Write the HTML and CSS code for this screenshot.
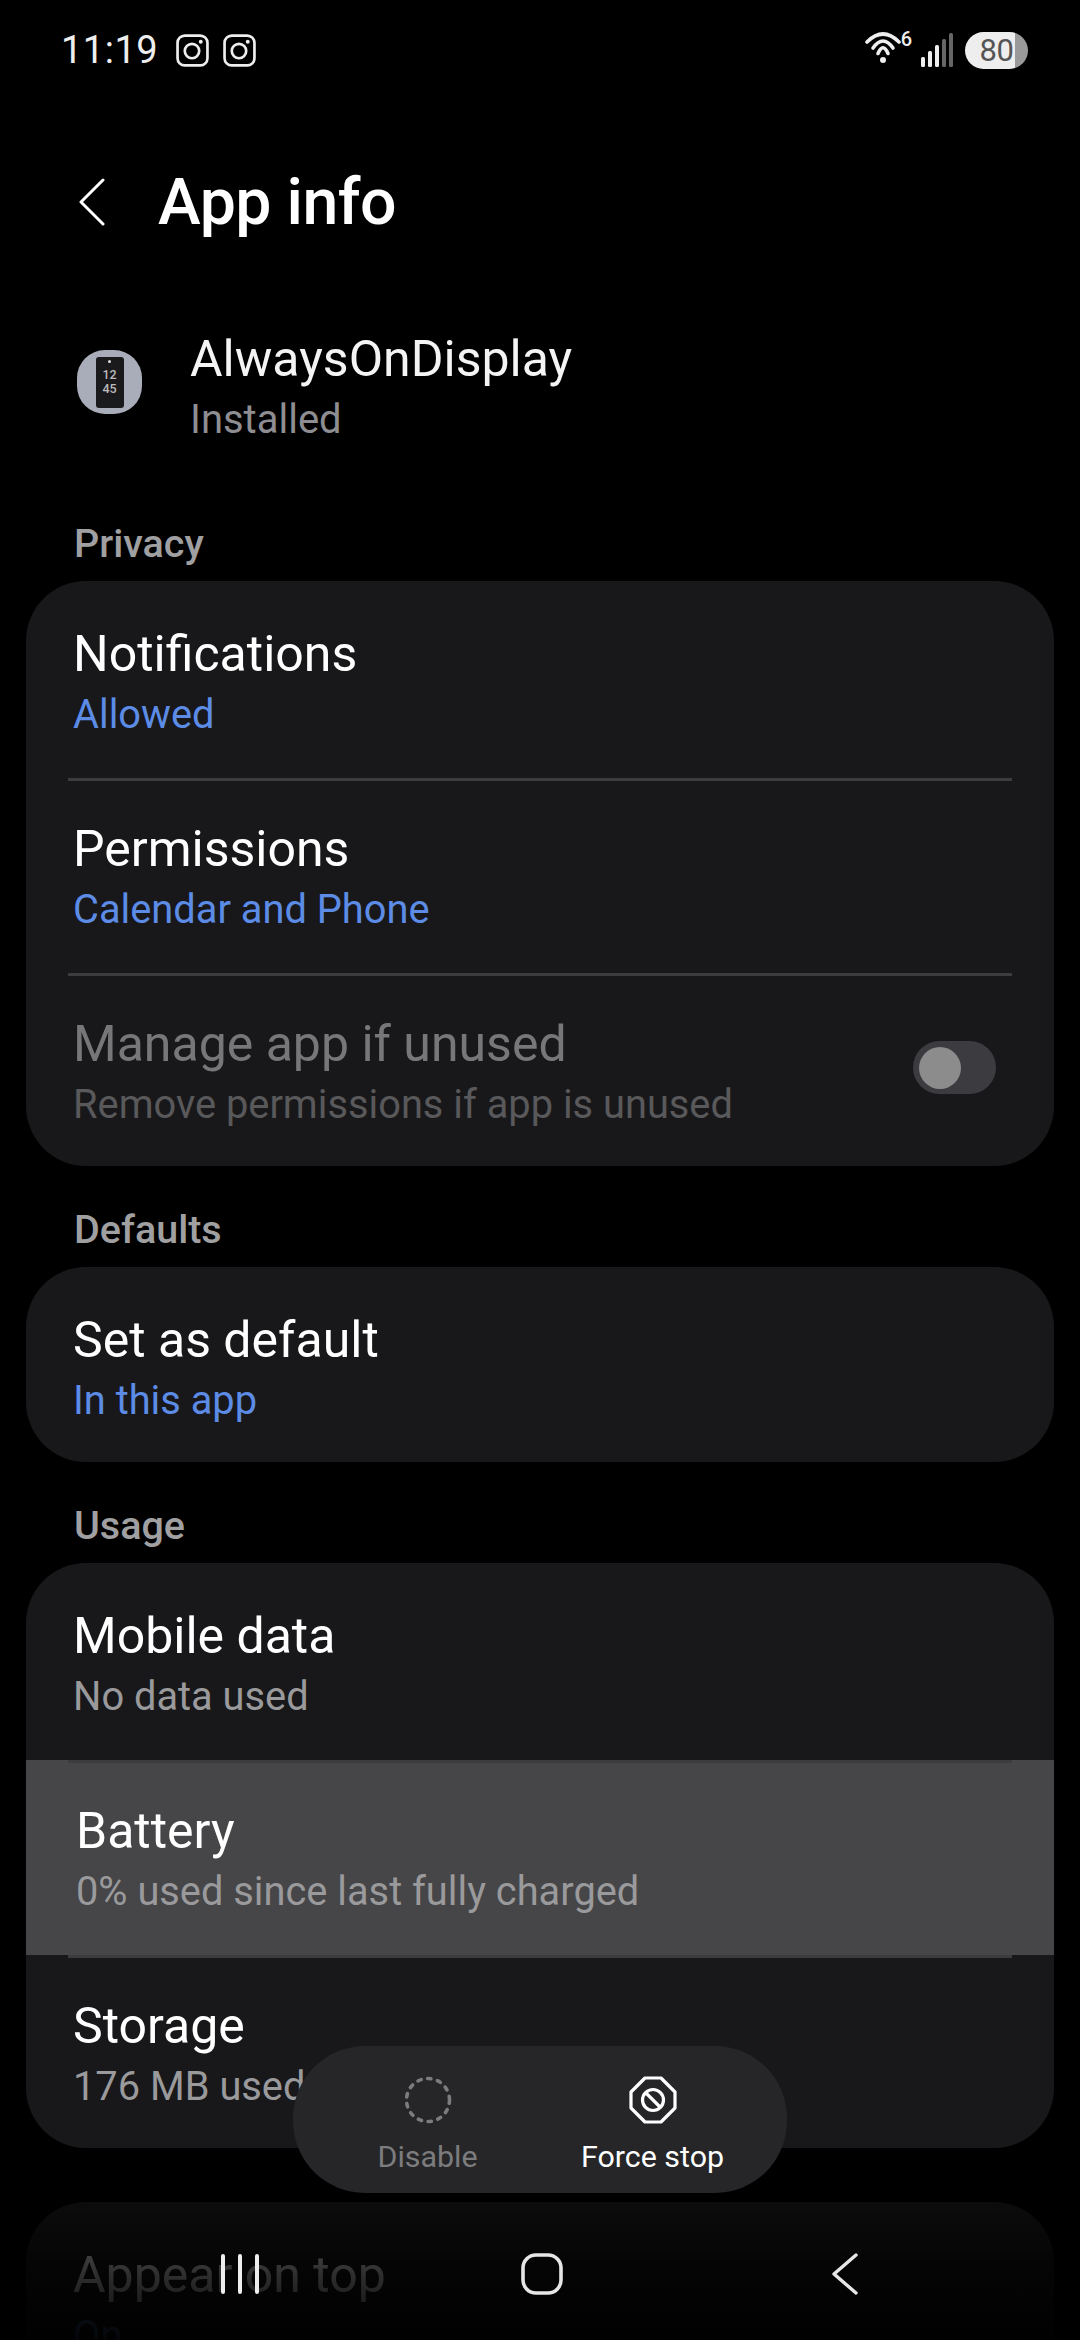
FILE: index.html
```html
<!DOCTYPE html>
<html lang="en">
<head>
    <meta charset="UTF-8">
    <meta name="viewport" content="width=device-width, initial-scale=1.0">
    <title>App info</title>
    <link rel="stylesheet" href="styles.css">
</head>
<body>
    <div class="screen">
        <div class="status-bar">
            <div class="status-left">
                <span class="clock">11:19</span>
                <svg class="insta" viewBox="0 0 32 32"><rect x="1.5" y="1.5" width="29" height="29" rx="7" fill="none" stroke="#eee" stroke-width="2.6"/><circle cx="15.5" cy="16.5" r="7" fill="none" stroke="#eee" stroke-width="2.6"/><circle cx="24" cy="7.5" r="1.9" fill="#eee"/></svg>
                <svg class="insta" viewBox="0 0 32 32"><rect x="1.5" y="1.5" width="29" height="29" rx="7" fill="none" stroke="#eee" stroke-width="2.6"/><circle cx="15.5" cy="16.5" r="7" fill="none" stroke="#eee" stroke-width="2.6"/><circle cx="24" cy="7.5" r="1.9" fill="#eee"/></svg>
            </div>
            <div class="status-right">
                <svg class="wifi" viewBox="0 0 36 32">
                    <path d="M2 10 Q18 -6 34 10" fill="none" stroke="#eee" stroke-width="3.6" stroke-linecap="round"/>
                    <path d="M8 16 Q18 2 28 16" fill="none" stroke="#eee" stroke-width="3.6" stroke-linecap="round"/>
                    <path d="M13 21.500 Q18 10 23 21.500" fill="none" stroke="#eee" stroke-width="3.6" stroke-linecap="round"/>
                    <circle cx="18" cy="28" r="3" fill="#eee"/>
                </svg>
                <span class="wifi-six">6</span>
                <svg class="signal" viewBox="0 0 32 34">
                    <rect x="0" y="24" width="4" height="10" rx="1.500" fill="#eee"/>
                    <rect x="7" y="18" width="4" height="16" rx="1.500" fill="#eee"/>
                    <rect x="14" y="12" width="4" height="22" rx="1.500" fill="#eee"/>
                    <rect x="21" y="6" width="4" height="28" rx="1.500" fill="#666"/>
                    <rect x="28" y="0" width="4" height="34" rx="1.500" fill="#666"/>
                </svg>
                <div class="battery"><span class="battery-level">80</span></div>
            </div>
        </div>

        <div class="app-bar">
            <svg class="back" viewBox="0 0 26 48"><path d="M24 2 L2 24 L24 46" fill="none" stroke="#fff" stroke-width="3" stroke-linecap="round" stroke-linejoin="round"/></svg>
            <h1 class="page-title">App info</h1>
        </div>

        <div class="app-head">
            <div class="app-icon">
                <div class="app-phone">
                    <span class="app-phone-dot"></span>
                    <span class="app-phone-time">12<br>45</span>
                </div>
            </div>
            <div class="app-text">
                <div class="app-name">AlwaysOnDisplay</div>
                <div class="app-state">Installed</div>
            </div>
        </div>

        <div class="section-label">Privacy</div>
        <div class="card">
            <div class="row">
                <div class="row-title">Notifications</div>
                <div class="row-sub blue">Allowed</div>
            </div>
            <div class="divider"></div>
            <div class="row">
                <div class="row-title">Permissions</div>
                <div class="row-sub blue">Calendar and Phone</div>
            </div>
            <div class="divider"></div>
            <div class="row row-toggle">
                <div>
                    <div class="row-title dim">Manage app if unused</div>
                    <div class="row-sub dimmer">Remove permissions if app is unused</div>
                </div>
                <div class="toggle"><span class="toggle-thumb"></span></div>
            </div>
        </div>

        <div class="section-label">Defaults</div>
        <div class="card">
            <div class="row">
                <div class="row-title">Set as default</div>
                <div class="row-sub blue">In this app</div>
            </div>
        </div>

        <div class="section-label">Usage</div>
        <div class="card">
            <div class="row">
                <div class="row-title">Mobile data</div>
                <div class="row-sub">No data used</div>
            </div>
            <div class="divider"></div>
            <div class="row row-pressed">
                <div class="row-title">Battery</div>
                <div class="row-sub">0% used since last fully charged</div>
            </div>
            <div class="divider"></div>
            <div class="row">
                <div class="row-title">Storage</div>
                <div class="row-sub">176 MB used</div>
            </div>
        </div>

        <div class="card card-next">
            <div class="row">
                <div class="row-title">Appear on top</div>
                <div class="row-sub blue">On</div>
            </div>
        </div>

        <div class="bottom-fade"></div>

        <div class="action-bar">
            <div class="action action-off">
                <svg class="action-icon" viewBox="0 0 48 48"><circle cx="24" cy="24" r="21.500" fill="none" stroke="#7c7c7e" stroke-width="3.600" stroke-linecap="round" stroke-dasharray="3.400 6.630"/></svg>
                <span>Disable</span>
            </div>
            <div class="action">
                <svg class="action-icon" viewBox="0 0 48 48">
                    <path d="M16 2 H32 L46 16 V32 L32 46 H16 L2 32 V16 Z" fill="none" stroke="#fff" stroke-width="3.200" stroke-linejoin="round"/>
                    <circle cx="24" cy="24" r="10.500" fill="none" stroke="#fff" stroke-width="3.200"/>
                    <path d="M17 17 L31 31" stroke="#fff" stroke-width="3.200"/>
                </svg>
                <span>Force stop</span>
            </div>
        </div>

        <div class="nav-bar">
            <svg class="nav-recents" viewBox="0 0 38 42"><path d="M2 3 V39 M19 3 V39 M36 3 V39" stroke="#eee" stroke-width="4" stroke-linecap="round" fill="none"/></svg>
            <svg class="nav-home" viewBox="0 0 42 42"><rect x="2" y="2" width="38" height="38" rx="13" fill="none" stroke="#e6e6e6" stroke-width="3.600"/></svg>
            <svg class="nav-back" viewBox="0 0 26 42"><path d="M24 2 L2 21 L24 40" fill="none" stroke="#e6e6e6" stroke-width="3.400" stroke-linecap="round" stroke-linejoin="round"/></svg>
        </div>
    </div>
</body>
</html>
```

FILE: styles.css
```css
* {
    box-sizing: border-box;
}
html, body {
    margin: 0;
    padding: 0;
    background-color: #000;
}
body {
    font-family: Roboto, "Noto Sans", sans-serif;
    color: #fff;
}
.screen {
    position: relative;
    width: 1080px;
    height: 2340px;
    padding: 0 26px;
    overflow: hidden;
    background-color: #000;
}

/* status bar */
.status-bar {
    display: flex;
    justify-content: space-between;
    align-items: center;
    height: 100px;
    padding: 0 26px 0 35px;
}
.status-left {
    display: flex;
    align-items: center;
}
.clock {
    width: 115px;
    font-size: 38px;
    letter-spacing: 0.5px;
    color: #eee;
}
.insta {
    width: 33px;
    height: 33px;
    margin-right: 14px;
}
.status-right {
    display: flex;
    align-items: center;
}
.wifi {
    width: 36px;
    height: 32px;
    margin-top: -4px;
}
.wifi-six {
    margin: -22px 9px 0 0;
    font-size: 20px;
    line-height: 20px;
    font-weight: 500;
    color: #eee;
}
.signal {
    width: 32px;
    height: 34px;
}
.battery {
    display: flex;
    align-items: center;
    justify-content: center;
    width: 63px;
    height: 37px;
    margin-left: 12px;
    border-radius: 19px;
    background: linear-gradient(to right, #eee 0, #eee 79%, #9a9a9a 79%);
}
.battery-level {
    font-size: 31px;
    color: #555;
    letter-spacing: -0.5px;
}

/* title */
.app-bar {
    display: flex;
    align-items: center;
    height: 102px;
    margin-top: 51px;
}
.back {
    width: 26px;
    height: 48px;
    margin-left: 53px;
}
.page-title {
    margin: 0 0 0 53px;
    font-size: 64.400px;
    font-weight: 500;
    line-height: 80px;
    letter-spacing: -0.5px;
}

/* app header */
.app-head {
    display: flex;
    align-items: center;
    height: 186px;
    margin-top: 41px;
    padding-left: 51px;
}
.app-icon {
    display: flex;
    justify-content: center;
    align-items: center;
    width: 65px;
    height: 64px;
    margin-right: 48px;
    margin-bottom: 10px;
    border-radius: 28px;
    background-color: #a9adb9;
}
.app-phone {
    display: flex;
    flex-direction: column;
    align-items: center;
    width: 28px;
    height: 51px;
    padding-top: 3px;
    border-radius: 3px;
    background-color: #1a1a1c;
}
.app-phone-dot {
    width: 3px;
    height: 3px;
    border-radius: 50%;
    background-color: #ddd;
}
.app-phone-time {
    margin-top: 5px;
    font-size: 12.500px;
    font-weight: 500;
    line-height: 14px;
    text-align: center;
    color: #bbb;
}
.app-text {
    padding-top: 4px;
}
.app-name {
    font-size: 50px;
    line-height: 58px;
    color: #f4f4f4;
}
.app-state {
    margin-top: 4px;
    font-size: 40px;
    line-height: 56px;
    color: #8e8e92;
}

/* list */
.section-label {
    display: flex;
    align-items: flex-end;
    height: 101px;
    padding: 0 0 12px 48px;
    font-size: 39.500px;
    font-weight: 500;
    line-height: 50px;
    color: #a0a0a2;
}
.card {
    padding-top: 5px;
    border-radius: 60px;
    background-color: #18181a;
    overflow: hidden;
}
.row {
    height: 192px;
    padding: 40px 47px 0;
}
.row:last-child {
    height: 190px;
}
.row-title {
    font-size: 50px;
    line-height: 56px;
    color: #fff;
}
.row-sub {
    margin-top: 5px;
    font-size: 39.800px;
    line-height: 56px;
    color: #9a9a9c;
}
.row-sub.blue {
    color: #5c8ce6;
}
.row-title.dim {
    color: #777779;
}
.row-sub.dimmer {
    color: #59595b;
}
.row-toggle {
    display: flex;
    justify-content: space-between;
    padding-right: 58px;
}
.toggle {
    display: flex;
    align-items: center;
    width: 83px;
    height: 53px;
    margin-top: 25px;
    padding-left: 6px;
    border-radius: 27px;
    background-color: #3c3c40;
}
.toggle-thumb {
    width: 42px;
    height: 42px;
    border-radius: 50%;
    background-color: #8c8c8c;
}
.divider {
    position: relative;
    height: 3px;
    margin: 0 42px;
    background-color: #3c3c3e;
}
.row-pressed {
    margin-top: -3px;
    height: 195px;
    padding: 43px 50px 0;
    background-color: #464648;
}
.card-next {
    margin-top: 54px;
}

/* things lying over the list */
.bottom-fade {
    position: absolute;
    left: 0;
    right: 0;
    top: 2160px;
    bottom: 0;
    background: linear-gradient(to bottom, rgba(0, 0, 0, 0.3), rgba(0, 0, 0, 0.5) 22%, rgba(0, 0, 0, 0.78) 56%, rgba(0, 0, 0, 0.86) 72%, rgba(0, 0, 0, 0.96));
}
.action-bar {
    position: absolute;
    left: 293px;
    top: 2046px;
    display: flex;
    width: 494px;
    height: 147px;
    padding: 0 22px;
    border-radius: 72px;
    background-color: #262628;
}
.action {
    display: flex;
    flex-direction: column;
    align-items: center;
    flex: 1;
    padding-top: 30px;
    font-size: 30.400px;
    line-height: 40px;
}
.action-off {
    color: #7c7c7e;
}
.action-icon {
    width: 48px;
    height: 48px;
    margin-bottom: 13px;
}
.nav-bar {
    position: absolute;
    left: 0;
    right: 0;
    top: 2253px;
    height: 42px;
}
.nav-recents {
    position: absolute;
    left: 221px;
    width: 38px;
    height: 42px;
}
.nav-home {
    position: absolute;
    left: 521px;
    width: 42px;
    height: 42px;
}
.nav-back {
    position: absolute;
    left: 832px;
    width: 26px;
    height: 42px;
}
```
